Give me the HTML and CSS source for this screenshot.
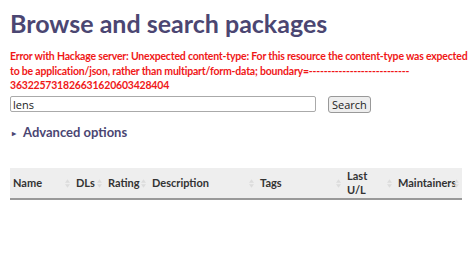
FILE: index.html
```html
<!DOCTYPE html>
<html lang="en">
<head>
  <meta charset="UTF-8" />
  <title>Browse and search packages</title>
  <link rel="stylesheet" href="styles.css">
</head>
<body>

<div class="page">
  <h1>Browse and search packages</h1>

  <!--  ERROR  -->
  <p class="error">Error with Hackage server: Unexpected content-type: For this resource the content-type was expected to be application/json, rather than multipart/form-data; boundary=---------------------------<wbr>363225731826631620603428404</p>

  <!--  SEARCH  -->
  <form class="search">
    <input type="text" value="lens">
    <button type="button">Search</button>
  </form>

  <details class="advanced">
    <summary>Advanced options</summary>
  </details>

  <!--  RESULTS  -->
  <table class="results">
    <colgroup>
      <col style="width:63px"><col style="width:32px"><col style="width:44px"><col style="width:108px">
      <col style="width:87px"><col style="width:51px"><col style="width:67px">
    </colgroup>
    <thead>
      <tr>
        <th>Name<svg class="sort" viewBox="0 0 6 10"><path d="M3 0L6 4H0z M3 10L6 6H0z"/></svg></th>
        <th>DLs<svg class="sort" viewBox="0 0 6 10"><path d="M3 0L6 4H0z M3 10L6 6H0z"/></svg></th>
        <th>Rating<svg class="sort" viewBox="0 0 6 10"><path d="M3 0L6 4H0z M3 10L6 6H0z"/></svg></th>
        <th>Description<svg class="sort" viewBox="0 0 6 10"><path d="M3 0L6 4H0z M3 10L6 6H0z"/></svg></th>
        <th>Tags<svg class="sort" viewBox="0 0 6 10"><path d="M3 0L6 4H0z M3 10L6 6H0z"/></svg></th>
        <th>Last U/L<svg class="sort" viewBox="0 0 6 10"><path d="M3 0L6 4H0z M3 10L6 6H0z"/></svg></th>
        <th>Maintainers<svg class="sort" viewBox="0 0 6 10"><path d="M3 0L6 4H0z M3 10L6 6H0z"/></svg></th>
      </tr>
    </thead>
  </table>
</div>

</body>
</html>
```

FILE: styles.css
```css
/* ----------  GLOBAL  ---------- */
*{box-sizing:border-box}
html,body{margin:0;padding:0;background:#fff;font-family:Lato,"Open Sans",sans-serif;color:#333}
.page{padding:8px 10px}
h1{margin:0;font-size:25px;font-weight:700;color:#4b4672;line-height:30px}

/* ----------  ERROR  ---------- */
.error{margin:11px 0 0;width:462px;color:#f01818;font-size:10.5px;letter-spacing:-0.2px;font-weight:700;line-height:14.5px}

/* ----------  SEARCH  ---------- */
.search{display:flex;align-items:center;margin-top:3px}
.search input{width:306px;height:16px;padding:0 2px;border:1px solid #aaa;border-radius:2px;font:11px "Open Sans",sans-serif;color:#222}
.search button{margin-left:12px;height:17px;padding:0 3px;background:#eee;border:1px solid #999;border-radius:3px;font:11px "Open Sans",sans-serif;color:#222}

.advanced{margin-top:11px}
.advanced summary{list-style:none;font-size:13px;font-weight:700;color:#4b4672;cursor:pointer}
.advanced summary::before{content:"\25B8";display:inline-block;width:11px;margin-left:2px;font-size:8px;vertical-align:1px;color:#4b4672}

/* ----------  RESULTS  ---------- */
.results{margin-top:28px;border-collapse:collapse;table-layout:fixed;width:452px}
.results th{position:relative;height:31px;padding:0 10px 0 3px;background:#eeeeee;border-bottom:2px solid #999;text-align:left;font-size:11px;font-weight:700;color:#333;line-height:14px}
.results th .sort{position:absolute;right:3px;top:11px;width:5px;height:9px;fill:#dcdcdc}
```
